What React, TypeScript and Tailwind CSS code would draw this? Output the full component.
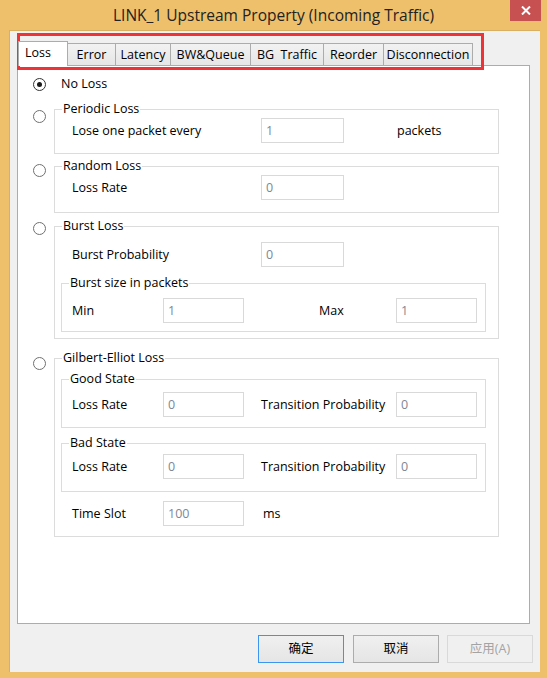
import React from "react";

function Radio({ checked = false, className = "" }: { checked?: boolean; className?: string }) {
  return (
    <div
      className={
        "w-[13px] h-[13px] shrink-0 rounded-full border bg-white flex items-center justify-center " +
        (checked ? "border-[#333333]" : "border-[#707070]") +
        " " +
        className
      }
    >
      {checked && <div className="w-[5px] h-[5px] rounded-full bg-[#1a1a1a]" />}
    </div>
  );
}

function Field({ value, w }: { value: string; w: string }) {
  return (
    <div
      className={
        "h-[25px] shrink-0 border border-[#d9d9d9] bg-white pl-[4px] flex items-center text-[#7d8795] " + w
      }
    >
      {value}
    </div>
  );
}

function Legend({ children }: { children: React.ReactNode }) {
  return <legend className="ml-[7px] px-[1px] leading-[16px] text-black">{children}</legend>;
}

const tabs: { label: string; w: string }[] = [
  { label: "Error", w: "w-[47px]" },
  { label: "Latency", w: "w-[55px]" },
  { label: "BW&Queue", w: "w-[80px]" },
  { label: "BG  Traffic", w: "w-[73px]" },
  { label: "Reorder", w: "w-[60px]" },
  { label: "Disconnection", w: "w-[90px]" },
];

export default function App() {
  return (
    <div className="relative w-[547px] h-[678px] bg-[#efc06b] overflow-hidden font-['Open_Sans','Noto_Sans_CJK_SC',sans-serif] text-[12.5px] leading-[16px] text-black">
      {/* Title bar */}
      <div className="relative h-[30px] flex items-center justify-center">
        <span className="text-[15.5px] text-[#222222] leading-[20px]">LINK_1 Upstream Property (Incoming Traffic)</span>
        <div className="absolute right-[6px] top-0 w-[31px] h-[21px] bg-[#c75050] flex items-center justify-center">
          <svg width="10" height="9" viewBox="0 0 10 9">
            <path d="M1 0.5 L9 8.5 M9 0.5 L1 8.5" stroke="white" strokeWidth="2" />
          </svg>
        </div>
      </div>

      {/* Client area */}
      <div className="ml-[9px] w-[531px] h-[642px] bg-[#f0f0f0] border-t border-l border-[#d9b062] flex flex-col">
        {/* Tabs */}
        <div className="pt-[9px] pl-[8px] flex items-end h-[34px]">
          <div className="relative z-10 w-[50px] h-[25px] -mb-px bg-white border-t border-l border-r border-[#acacac] flex items-start pt-[3px] pl-[6px]">
            Loss
          </div>
          {tabs.map((t, i) => (
            <div
              key={t.label}
              className={
                "h-[22px] bg-gradient-to-b from-[#f2f2f2] to-[#e6e6e6] border-t border-[#acacac] flex items-center justify-center whitespace-pre " +
                (i === tabs.length - 1 ? "border-r " : "") +
                (i === 0 ? "" : "border-l ") +
                t.w
              }
            >
              {t.label}
            </div>
          ))}
        </div>

        {/* Panel */}
        <div className="ml-[7px] w-[513px] h-[559px] bg-white border border-[#acacac] pt-[10px] pl-[15px] flex flex-col">
          {/* No Loss */}
          <div className="flex items-center h-[16px]">
            <Radio checked />
            <span className="ml-[15px]">No Loss</span>
          </div>

          {/* Periodic Loss */}
          <div className="flex items-start mt-[9px]">
            <Radio className="mt-[9px]" />
            <fieldset className="ml-[8px] w-[445px] border border-[#dcdcdc] pb-[10px]">
              <Legend>Periodic Loss</Legend>
              <div className="mt-[1px] h-[25px] flex items-center pl-[17px]">
                <span className="w-[189px]">Lose one packet every</span>
                <Field value="1" w="w-[83px]" />
                <span className="ml-[53px]">packets</span>
              </div>
            </fieldset>
          </div>

          {/* Random Loss */}
          <div className="flex items-start mt-[4px]">
            <Radio className="mt-[6px]" />
            <fieldset className="ml-[8px] w-[445px] border border-[#dcdcdc] pb-[12px]">
              <Legend>Random Loss</Legend>
              <div className="mt-[1px] h-[25px] flex items-center pl-[17px]">
                <span className="w-[189px]">Loss Rate</span>
                <Field value="0" w="w-[83px]" />
              </div>
            </fieldset>
          </div>

          {/* Burst Loss */}
          <div className="flex items-start mt-[5px]">
            <Radio className="mt-[4px]" />
            <fieldset className="ml-[8px] w-[445px] border border-[#dcdcdc] pb-[6px]">
              <Legend>Burst Loss</Legend>
              <div className="mt-[8px] h-[25px] flex items-center pl-[17px]">
                <span className="w-[189px]">Burst Probability</span>
                <Field value="0" w="w-[83px]" />
              </div>
              <fieldset className="mt-[8px] ml-[6px] w-[425px] border border-[#dcdcdc] pb-[8px]">
                <Legend>Burst size in packets</Legend>
                <div className="mt-[7px] h-[25px] flex items-center pl-[10px]">
                  <span className="w-[91px]">Min</span>
                  <Field value="1" w="w-[81px]" />
                  <span className="ml-[75px] w-[77px]">Max</span>
                  <Field value="1" w="w-[81px]" />
                </div>
              </fieldset>
            </fieldset>
          </div>

          {/* Gilbert-Elliot Loss */}
          <div className="flex items-start mt-[11px]">
            <Radio className="mt-[7px]" />
            <fieldset className="ml-[8px] w-[445px] border border-[#dcdcdc] pb-[10px]">
              <Legend>Gilbert-Elliot Loss</Legend>
              <fieldset className="mt-[5px] ml-[6px] w-[425px] border border-[#dcdcdc] pb-[10px]">
                <Legend>Good State</Legend>
                <div className="mt-[5px] h-[25px] flex items-center pl-[10px]">
                  <span className="w-[91px]">Loss Rate</span>
                  <Field value="0" w="w-[81px]" />
                  <span className="ml-[17px] w-[135px] whitespace-nowrap">Transition Probability</span>
                  <Field value="0" w="w-[81px]" />
                </div>
              </fieldset>
              <fieldset className="mt-[7px] ml-[6px] w-[425px] border border-[#dcdcdc] pb-[12px]">
                <Legend>Bad State</Legend>
                <div className="mt-[3px] h-[25px] flex items-center pl-[10px]">
                  <span className="w-[91px]">Loss Rate</span>
                  <Field value="0" w="w-[81px]" />
                  <span className="ml-[17px] w-[135px] whitespace-nowrap">Transition Probability</span>
                  <Field value="0" w="w-[81px]" />
                </div>
              </fieldset>
              <div className="mt-[9px] h-[25px] flex items-center pl-[17px]">
                <span className="w-[91px]">Time Slot</span>
                <Field value="100" w="w-[81px]" />
                <span className="ml-[19px]">ms</span>
              </div>
            </fieldset>
          </div>
        </div>

        {/* Buttons */}
        <div className="mt-[11px] flex pl-[248px]">
          <button className="w-[86px] h-[28px] border border-[#3c96f0] bg-gradient-to-b from-[#f0f0f0] to-[#e5e5e5] text-black">
            确定
          </button>
          <button className="ml-[9px] w-[86px] h-[28px] border border-[#acacac] bg-gradient-to-b from-[#f0f0f0] to-[#e5e5e5] text-black">
            取消
          </button>
          <button className="ml-[8px] w-[86px] h-[28px] border border-[#d9d9d9] bg-[#f0f0f0] text-[#a3a3a3]">
            应用(A)
          </button>
        </div>
      </div>

      {/* Red annotation box */}
      <div className="absolute left-[17px] top-[33px] w-[467px] h-[37px] border-[3px] border-[#ee3338] pointer-events-none" />
    </div>
  );
}
